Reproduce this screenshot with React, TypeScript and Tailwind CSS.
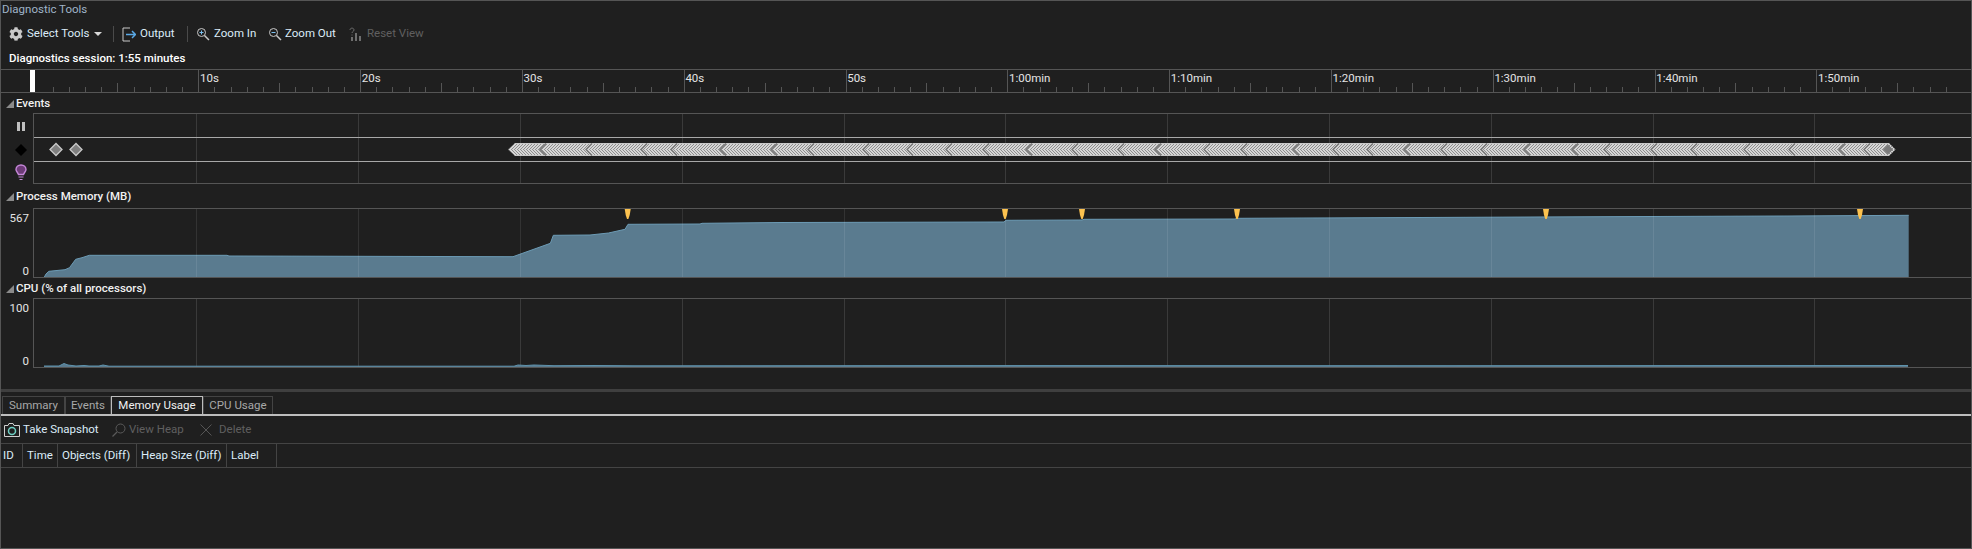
import React from "react";
import { FaCog } from "react-icons/fa";

const GRID_START = 35.5;
const GRID_STEP = 161.8;
const gridXs = Array.from({ length: 12 }, (_, i) => GRID_START + GRID_STEP * i);
const timeLabels = ["10s", "20s", "30s", "40s", "50s", "1:00min", "1:10min", "1:20min", "1:30min", "1:40min", "1:50min"];

const memoryPoints = [
  [44.8, 69], [47, 65], [49.8, 62.3], [66, 60.7], [70.5, 58.7], [76.7, 50.3], [83, 48.7], [90.4, 46.3],
  [228, 46.3], [230, 47], [514, 47.7], [551.4, 34.3], [554.3, 26.3], [591, 26], [609.5, 24], [626, 20.3],
  [629, 15.3], [701, 15], [703, 14.3], [783, 13.5], [1005, 13], [1007, 11.3], [1083, 11], [1085, 10.3],
  [1236, 10], [1238, 9.3], [1650, 7.5], [1790, 7], [1909.7, 6.3],
];
const memoryMarkers = [628.7, 1006, 1083, 1238, 1547, 1861];
// x of each darker chevron tip in the events band
const chevrons = [541, 587, 642, 672, 721, 772, 809, 864, 908, 947, 984, 1027, 1073, 1119, 1156, 1205, 1242, 1294, 1334, 1368, 1405, 1442, 1482, 1525, 1573, 1605, 1652, 1692, 1745, 1790, 1840, 1865];
const weaveRows = Array.from({ length: 13 }, (_, y) => Math.abs(y - 6) % 3);

const SectionHeader = ({ title, height }: { title: string; height: string }) => (
  <div className={`flex items-center pl-[4px] pt-[2px] ${height}`}>
    <svg width="10" height="10" viewBox="0 0 10 10" className="mr-[1px]">
      <path d="M1 9 L9 1 L9 9 Z" fill="#8a8a8a" />
    </svg>
    <span className="font-medium text-[#f1f1f1]">{title}</span>
  </div>
);

const GridLines = ({ height }: { height: number }) => (
  <>
    {gridXs.slice(1).map((x) => (
      <line key={x} x1={Math.round(x - 35) + 0.5} x2={Math.round(x - 35) + 0.5} y1={0} y2={height} stroke="#3a3a3a" />
    ))}
  </>
);

const Ruler = () => {
  const ticks = Array.from({ length: 119 }, (_, i) => GRID_START + (GRID_STEP / 10) * i);
  return (
    <div className="relative h-[24px] border-y border-[#555555]">
      <svg className="absolute inset-0" width="1970" height="22">
        {ticks.map((x, i) => {
          const major = i % 10 === 0;
          const mid = i % 5 === 0;
          if (i === 0) return null;
          return (
            <line
              key={i}
              x1={Math.round(x) + 0.5}
              x2={Math.round(x) + 0.5}
              y1={major ? 0 : mid ? 13 : 17}
              y2={22}
              stroke="#555555"
            />
          );
        })}
      </svg>
      <div className="absolute left-[29px] top-0 h-[22px] w-[5px] bg-white" />
      <div className="flex h-full pl-[197px] pt-[1px] text-[#e4e4e4]">
        {timeLabels.map((label) => (
          <div key={label} className="w-[161.8px] shrink-0 pl-[2px] leading-[14px]">
            {label}
          </div>
        ))}
      </div>
    </div>
  );
};

const EventsChart = () => (
  <div className="flex h-[71px]">
    <div className="flex w-[33px] flex-col items-center pl-[7px] pt-[1px]">
      <div className="flex h-[24px] items-center gap-[2px]">
        <div className="h-[9px] w-[3px] bg-[#c0c0c0]" />
        <div className="h-[9px] w-[3px] bg-[#c0c0c0]" />
      </div>
      <div className="flex h-[24px] items-center">
        <svg width="14" height="14" viewBox="0 0 14 14">
          <path d="M7 1 L13 7 L7 13 L1 7 Z" fill="#000000" />
        </svg>
      </div>
      <div className="flex h-[22px] items-center">
        <svg width="12" height="18" viewBox="0 0 12 18" fill="none">
          <path d="M6 1 C3 1 1 3 1 5.5 C1 7.5 3 8.5 3.5 10.5 L8.5 10.5 C9 8.5 11 7.5 11 5.5 C11 3 9 1 6 1 Z" fill="#6d3b78" stroke="#c586d8" strokeWidth="1.4" />
          <path d="M3.5 13 H8.5 M4.5 15.5 H7.5" stroke="#c586d8" strokeWidth="1.2" />
        </svg>
      </div>
    </div>
    <div className="flex-1 border-y border-l border-[#555555]">
      <svg width="1937" height="69" className="block">
        <defs>
          <pattern id="weave" x="0" y="29" width="3" height="13" patternUnits="userSpaceOnUse">
            <rect width="3" height="13" fill="#d6d6d6" />
            {weaveRows.map((x, y) => (
              <rect key={y} x={x} y={y} width="1" height="1" fill="#8e8e8e" />
            ))}
            <rect width="3" height="1" fill="#c8c8c8" />
            <rect y="12" width="3" height="1" fill="#c8c8c8" />
          </pattern>
        </defs>
        <GridLines height={69} />
        <line x1="0" x2="1937" y1="23.5" y2="23.5" stroke="#a8a8a8" />
        <line x1="0" x2="1937" y1="47.5" y2="47.5" stroke="#a8a8a8" />
        <path d="M16 35.5 L22 29.5 L28 35.5 L22 41.5 Z" fill="#7f7f7f" stroke="#c8c8c8" strokeWidth="1.3" />
        <path d="M36 35.5 L42 29.5 L48 35.5 L42 41.5 Z" fill="#7f7f7f" stroke="#c8c8c8" strokeWidth="1.3" />
        <path d="M474 35.5 L481 29 L1855 29 L1861.5 35.5 L1855 42 L481 42 Z" fill="url(#weave)" />
        {chevrons.map((x) => (
          <path key={x} d={`M${x - 29} 29.5 L${x - 35} 35.5 L${x - 29} 41.5`} fill="none" stroke="#757575" strokeWidth="1.3" />
        ))}
        <path d="M1849 35.5 L1854 30.5 L1859 35.5 L1854 40.5 Z" fill="#7a7a7a" />
      </svg>
    </div>
  </div>
);

const MemoryChart = () => {
  const top = memoryPoints.map(([x, y]) => `${x - 35},${y}`).join(" ");
  return (
    <div className="flex h-[70px]">
      <div className="flex w-[33px] flex-col items-end justify-between pr-[4px] leading-[16px] text-[#e4e4e4]">
        <span className="mt-[2px]">567</span>
        <span className="-mb-[1px]">0</span>
      </div>
      <div className="flex-1 border-y border-l border-[#555555]">
        <svg width="1937" height="68" className="block">
          <polygon points={`9.8,68 ${top} 1874.7,68`} fill="#5a7b8f" />
          <polyline points={top} fill="none" stroke="#6c9bb5" strokeWidth="1" />
          {gridXs.slice(1).map((x) => (
            <line key={x} x1={Math.round(x - 35) + 0.5} x2={Math.round(x - 35) + 0.5} y1={0} y2={68} stroke="#ffffff" strokeOpacity="0.09" />
          ))}
          {memoryMarkers.map((x) => {
            const c = x - 35;
            return (
              <path key={x} d={`M${c - 3} 0 H${c + 3} L${c + 2} 6 L${c + 0.7} 10 H${c - 0.7} L${c - 2} 6 Z`} fill="#fcc24f" />
            );
          })}
        </svg>
      </div>
    </div>
  );
};

const CpuChart = () => {
  const bumps = [[10, 67], [25, 67], [30, 64.5], [34, 66], [42, 67], [50, 66.5], [55, 67], [65, 67], [69, 66], [75, 67.2], [480, 67.2], [484, 66], [492, 66.5], [500, 66], [520, 66.7], [560, 66.5], [600, 66.8], [1000, 66.6], [1400, 66.7], [1874, 66.5]];
  const line = bumps.map(([x, y]) => `${x},${y}`).join(" ");
  return (
    <div className="flex h-[70px]">
      <div className="flex w-[33px] flex-col items-end justify-between pr-[4px] leading-[16px] text-[#e4e4e4]">
        <span className="mt-[2px]">100</span>
        <span className="-mb-[1px]">0</span>
      </div>
      <div className="flex-1 border-y border-l border-[#555555]">
        <svg width="1937" height="68" className="block">
          <GridLines height={68} />
          <polygon points={`10,68 ${line} 1874,68`} fill="#5a7b8f" />
          <polyline points={line} fill="none" stroke="#5f93ad" />
        </svg>
      </div>
    </div>
  );
};

const tabs = [
  { name: "Summary", width: "w-[63px]" },
  { name: "Events", width: "w-[46px]" },
  { name: "Memory Usage", width: "w-[92px]", active: true },
  { name: "CPU Usage", width: "w-[70px]" },
];

const columns = [
  { name: "ID", width: "w-[22px] pl-[2px]" },
  { name: "Time", width: "w-[35px] pl-[4px]" },
  { name: "Objects (Diff)", width: "w-[79px] pl-[4px]" },
  { name: "Heap Size (Diff)", width: "w-[90px] pl-[4px]" },
  { name: "Label", width: "w-[50px] pl-[4px]" },
];

export default function App() {
  return (
    <div
      className="flex h-[549px] w-[1972px] flex-col overflow-hidden border border-[#555555] bg-[#1f1f1f] text-[11.5px] leading-none text-[#dcdcdc]"
      style={{ fontFamily: "Roboto, sans-serif" }}
    >
      <div className="flex h-[18px] items-center pl-[1px] text-[#9fb4c8]">Diagnostic Tools</div>

      {/* Main toolbar */}
      <div className="flex h-[29px] items-center pl-[8px] pt-[1px]">
        <FaCog className="h-[14px] w-[14px] text-[#c8c8c8]" />
        <span className="ml-[4px] w-[62px] whitespace-nowrap text-[#dcecf8]">Select Tools</span>
        <svg width="8" height="4" viewBox="0 0 8 4" className="ml-[5px]">
          <path d="M0 0 H8 L4 4 Z" fill="#d8d8d8" />
        </svg>
        <div className="ml-[11px] h-[16px] w-px bg-[#4a4a4a]" />
        <svg width="14" height="15" viewBox="0 0 14 15" className="ml-[8px]" fill="none">
          <path d="M8 1 H1 V14 H8" stroke="#c8c8c8" />
          <path d="M4 7.5 H13 M10 4 L13.5 7.5 L10 11" stroke="#5aa9e6" strokeWidth="1.5" />
        </svg>
        <span className="ml-[4px] w-[38px] whitespace-nowrap text-[#dcecf8]">Output</span>
        <div className="ml-[9px] h-[16px] w-px bg-[#4a4a4a]" />
        <svg width="14" height="14" viewBox="0 0 14 14" className="ml-[8px]" fill="none">
          <circle cx="5.5" cy="5.5" r="4" stroke="#c8c8c8" />
          <path d="M8.5 8.5 L13 13" stroke="#c8c8c8" strokeWidth="1.5" />
          <path d="M3.5 5.5 H7.5 M5.5 3.5 V7.5" stroke="#7cc0ef" />
        </svg>
        <span className="ml-[4px] w-[44px] whitespace-nowrap text-[#dcecf8]">Zoom In</span>
        <svg width="14" height="14" viewBox="0 0 14 14" className="ml-[10px]" fill="none">
          <circle cx="5.5" cy="5.5" r="4" stroke="#c8c8c8" />
          <path d="M8.5 8.5 L13 13" stroke="#c8c8c8" strokeWidth="1.5" />
          <path d="M3.5 5.5 H7.5" stroke="#7cc0ef" />
        </svg>
        <span className="ml-[3px] w-[55px] whitespace-nowrap text-[#dcecf8]">Zoom Out</span>
        <svg width="14" height="14" viewBox="0 0 14 14" className="ml-[9px]" fill="none">
          <path d="M1 3 C1 0.5 5 0.5 5 3 C5 4.5 3 4.5 3 6 M3 7.5 V8.5" stroke="#6e6e6e" />
          <path d="M2 10 H4 V14 H2 Z M6 6 H8 V14 H6 Z M10 9 H12 V14 H10 Z" fill="#6e6e6e" />
        </svg>
        <span className="ml-[4px] whitespace-nowrap text-[#5f5f5f]">Reset View</span>
      </div>

      <div className="flex h-[21px] items-center pl-[8px] font-medium text-white">Diagnostics session: 1:55 minutes</div>

      <Ruler />
      <SectionHeader title="Events" height="h-[20px]" />
      <EventsChart />
      <SectionHeader title="Process Memory (MB)" height="h-[24px]" />
      <MemoryChart />
      <SectionHeader title="CPU (% of all processors)" height="h-[20px]" />
      <CpuChart />

      {/* Bottom panel */}
      <div className="mt-[21px] h-[3px] bg-[#3f3f3f]" />
      <div className="flex h-[24px] items-end border-b-2 border-[#bdbdbd] pl-[1px] pt-[4px]">
        {tabs.map((tab) => (
          <div
            key={tab.name}
            className={`flex h-full items-center justify-center border-x border-t ${tab.width} ${
              tab.active ? "border-[#bdbdbd] text-[#f1f1f1]" : "border-[#444444] text-[#a8a8a8]"
            }`}
          >
            {tab.name}
          </div>
        ))}
      </div>

      <div className="flex h-[28px] items-center border-b border-[#444444] pl-[3px]">
        <svg width="16" height="14" viewBox="0 0 16 14" fill="none">
          <path d="M0.5 2.5 H4 L5 0.5 H9 L10 2.5 H15.5 V13.5 H0.5 Z" stroke="#d0d0d0" />
          <circle cx="8" cy="8" r="3.5" stroke="#6fd0c4" strokeWidth="1.5" />
        </svg>
        <span className="ml-[3px] w-[75px] whitespace-nowrap text-[#dcecf8]">Take Snapshot</span>
        <svg width="14" height="14" viewBox="0 0 14 14" className="ml-[14px]" fill="none">
          <circle cx="8.5" cy="5.5" r="4.5" stroke="#5a5a5a" />
          <path d="M5 9 L0.5 13.5" stroke="#5a5a5a" strokeWidth="1.3" />
        </svg>
        <span className="ml-[3px] w-[56px] whitespace-nowrap text-[#5f5f5f]">View Heap</span>
        <svg width="12" height="12" viewBox="0 0 12 12" className="ml-[15px]" fill="none">
          <path d="M0.5 0.5 L11.5 11.5 M11.5 0.5 L0.5 11.5" stroke="#555555" />
        </svg>
        <span className="ml-[7px] whitespace-nowrap text-[#5f5f5f]">Delete</span>
      </div>

      <div className="flex h-[24px] border-b border-[#444444]">
        {columns.map((col) => (
          <div key={col.name} className={`flex items-center whitespace-nowrap border-r border-[#444444] text-[#dcecf8] ${col.width}`}>
            {col.name}
          </div>
        ))}
      </div>
    </div>
  );
}
